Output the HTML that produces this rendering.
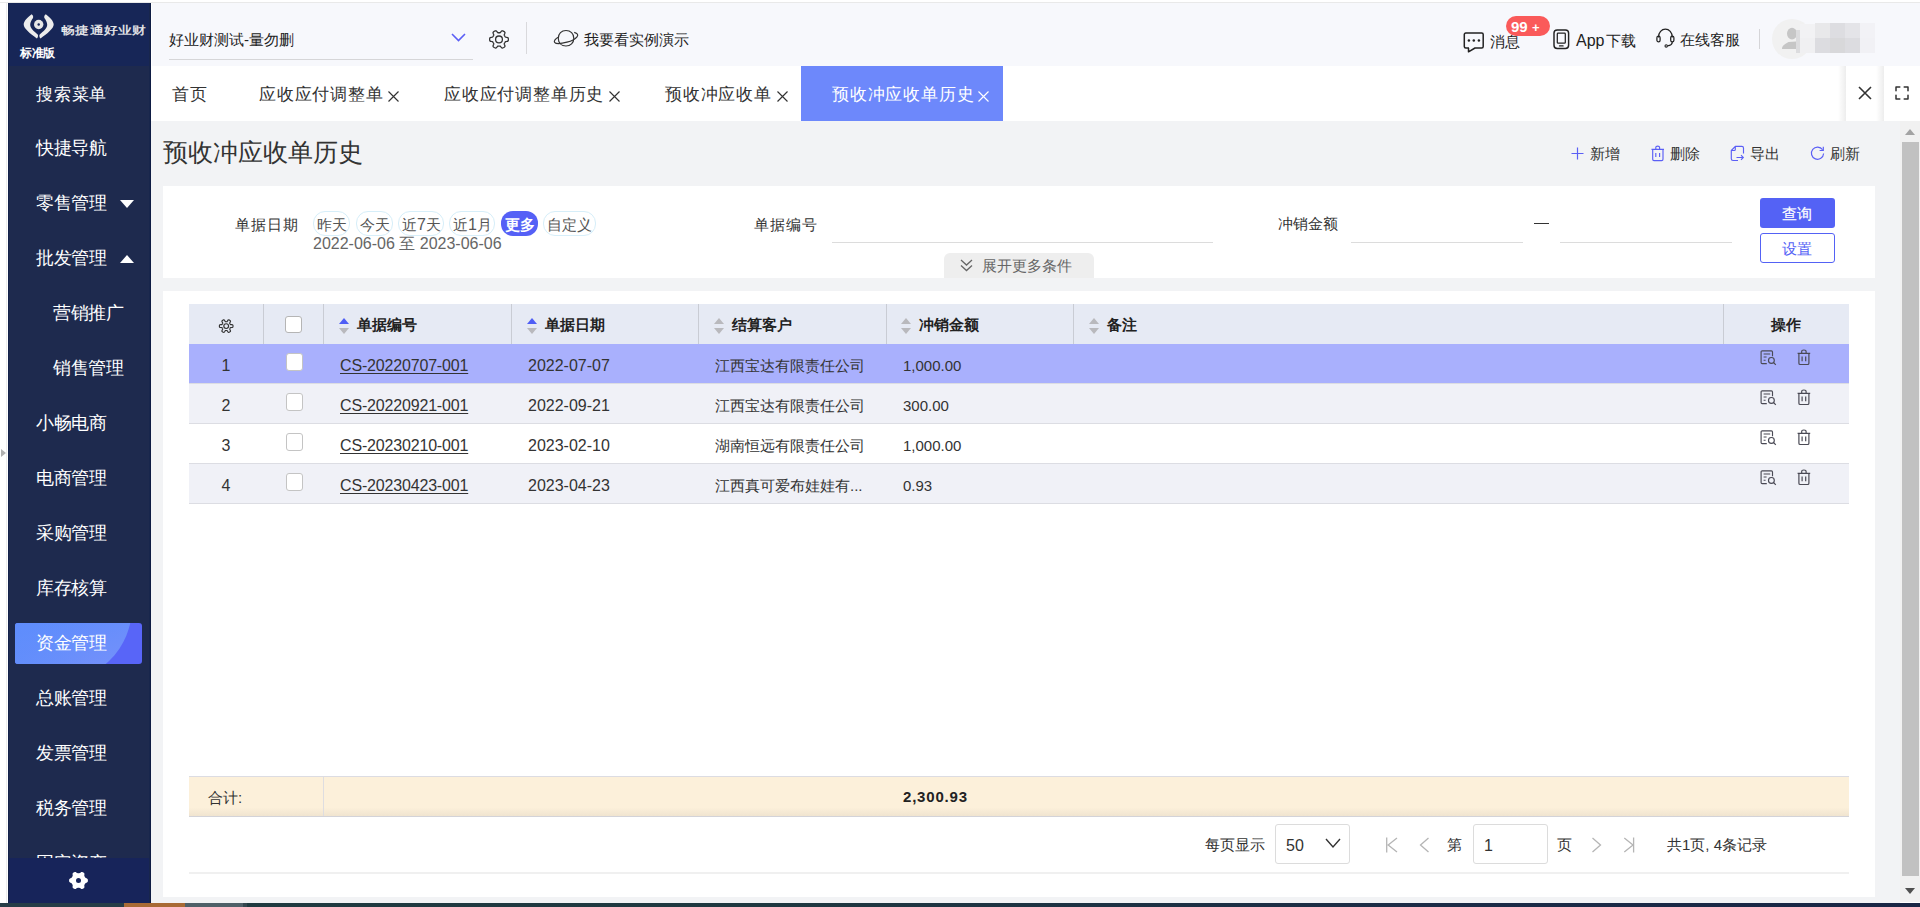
<!DOCTYPE html>
<html><head><meta charset="utf-8">
<style>
*{box-sizing:border-box;margin:0;padding:0}
html,body{width:1920px;height:907px;overflow:hidden;background:#fff;font-family:"Liberation Sans",sans-serif;color:#333}
.a{position:absolute;white-space:nowrap}
.t{position:absolute;white-space:nowrap;line-height:1}
svg{position:absolute;overflow:visible}
</style></head><body>
<!-- frame lines -->
<div class="a" style="left:0;top:2px;width:1920px;height:1px;background:#e9e9e9"></div>
<div class="a" style="left:6px;top:2px;width:1px;height:901px;background:#ececec"></div>

<!-- SIDEBAR -->
<div class="a" style="left:8px;top:3px;width:143px;height:900px;background:#1e2a4e"></div>
<div class="a" style="left:8px;top:3px;width:143px;height:63px;background:#172657"></div>
<div class="a" style="left:149px;top:3px;width:1px;height:900px;background:#18264c"></div><div class="a" style="left:150px;top:3px;width:1px;height:900px;background:#0e1c43"></div>
<!-- logo -->
<svg style="left:20px;top:10px" width="40" height="32" viewBox="0 0 40 32">
  <g id="pt"><path d="M11.6 4.2 C7.5 7.5 3.7 11 3.7 14.5 C3.7 18.5 10 23.5 16.9 28.4 C18.2 27.3 18.3 25.6 17.7 24.6 C14 21.2 10.2 18.3 10.2 14.8 C10.2 12.3 11.6 10 13 8 C13.6 6.4 12.8 5 11.6 4.2 Z" fill="#ececec"/></g>
  <g transform="translate(37.4 0) scale(-1 1)"><path d="M11.6 4.2 C7.5 7.5 3.7 11 3.7 14.5 C3.7 18.5 10 23.5 16.9 28.4 C18.2 27.3 18.3 25.6 17.7 24.6 C14 21.2 10.2 18.3 10.2 14.8 C10.2 12.3 11.6 10 13 8 C13.6 6.4 12.8 5 11.6 4.2 Z" fill="#ececec"/></g>
  <circle cx="18.7" cy="14.5" r="4.7" fill="#e6e6e6"/><circle cx="18.7" cy="14.5" r="1.2" fill="#172657"/>
</svg>
<div class="t" style="left:61px;top:23.5px;font-size:14px;color:#f0f0f0;letter-spacing:0.3px;-webkit-text-stroke:0.35px #f0f0f0;transform:scaleY(0.8);transform-origin:0 0">畅捷通好业财</div>
<div class="t" style="left:20px;top:47px;font-size:12px;color:#fff;font-weight:bold;letter-spacing:-0.5px">标准版</div>

<!-- menu -->
<div class="t" style="left:36px;top:86px;font-size:17px;letter-spacing:0.8px;color:#fff">搜索菜单</div>
<div class="t" style="left:36px;top:140px;font-size:17.5px;color:#fff;letter-spacing:-0.5px">快捷导航</div>
<div class="t" style="left:36px;top:195px;font-size:17.5px;color:#fff;letter-spacing:-0.5px">零售管理</div>
<svg style="left:120px;top:200px" width="14" height="8"><path d="M0 0H14L7 8Z" fill="#fff"/></svg>
<div class="t" style="left:36px;top:250px;font-size:17.5px;color:#fff;letter-spacing:-0.5px">批发管理</div>
<svg style="left:120px;top:255px" width="14" height="8"><path d="M0 8H14L7 0Z" fill="#fff"/></svg>
<div class="t" style="left:53px;top:305px;font-size:17.5px;color:#fff;letter-spacing:-0.5px">营销推广</div>
<div class="t" style="left:53px;top:360px;font-size:17.5px;color:#fff;letter-spacing:-0.5px">销售管理</div>
<div class="t" style="left:36px;top:415px;font-size:17.5px;color:#fff;letter-spacing:-0.5px">小畅电商</div>
<div class="t" style="left:36px;top:470px;font-size:17.5px;color:#fff;letter-spacing:-0.5px">电商管理</div>
<div class="t" style="left:36px;top:525px;font-size:17.5px;color:#fff;letter-spacing:-0.5px">采购管理</div>
<div class="t" style="left:36px;top:580px;font-size:17.5px;color:#fff;letter-spacing:-0.5px">库存核算</div>
<div class="a" style="left:15px;top:623px;width:127px;height:41px;border-radius:3px;overflow:hidden;background:#5865f8">
  <div class="a" style="left:-33.5px;top:-91.2px;width:150px;height:150px;border-radius:75px;background:linear-gradient(160deg,#6a7ffb 0%,#5f8cfc 55%,#7a92fa 100%)"></div>
  <div class="a" style="left:0;top:0;width:127px;height:41px;background:linear-gradient(90deg,rgba(95,142,252,0.6),rgba(95,142,252,0) 60%)"></div>
</div>
<div class="t" style="left:36px;top:635px;font-size:17.5px;color:#fff;letter-spacing:-0.5px">资金管理</div>
<div class="t" style="left:36px;top:690px;font-size:17.5px;color:#fff;letter-spacing:-0.5px">总账管理</div>
<div class="t" style="left:36px;top:745px;font-size:17.5px;color:#fff;letter-spacing:-0.5px">发票管理</div>
<div class="t" style="left:36px;top:800px;font-size:17.5px;color:#fff;letter-spacing:-0.5px">税务管理</div>
<div class="t" style="left:36px;top:855px;font-size:17.5px;color:#fff;letter-spacing:-0.5px">固定资产</div>
<div class="a" style="left:8px;top:858px;width:141px;height:45px;background:#17245a"></div>
<svg style="left:68px;top:870px" width="21" height="21" viewBox="0 0 21 21"><path fill="#fff" fill-rule="evenodd" d="M19.90 10.50 L19.88 10.01 L19.79 9.52 L19.61 9.06 L19.22 8.65 L18.57 8.34 L17.91 8.09 L17.48 7.82 L17.22 7.51 L17.01 7.18 L16.82 6.85 L16.63 6.52 L16.45 6.18 L16.31 5.79 L16.29 5.29 L16.40 4.60 L16.46 3.88 L16.30 3.33 L15.99 2.94 L15.61 2.63 L15.20 2.36 L14.76 2.13 L14.30 1.96 L13.80 1.89 L13.25 2.03 L12.66 2.43 L12.12 2.88 L11.67 3.11 L11.27 3.18 L10.88 3.20 L10.50 3.20 L10.12 3.20 L9.73 3.18 L9.33 3.11 L8.88 2.88 L8.34 2.43 L7.75 2.03 L7.20 1.89 L6.70 1.96 L6.24 2.13 L5.80 2.36 L5.39 2.63 L5.01 2.94 L4.70 3.33 L4.54 3.88 L4.60 4.60 L4.71 5.29 L4.69 5.79 L4.55 6.18 L4.37 6.52 L4.18 6.85 L3.99 7.18 L3.78 7.51 L3.52 7.82 L3.09 8.09 L2.43 8.34 L1.78 8.65 L1.39 9.06 L1.21 9.52 L1.12 10.01 L1.10 10.50 L1.12 10.99 L1.21 11.48 L1.39 11.94 L1.78 12.35 L2.43 12.66 L3.09 12.91 L3.52 13.18 L3.78 13.49 L3.99 13.82 L4.18 14.15 L4.37 14.48 L4.55 14.82 L4.69 15.21 L4.71 15.71 L4.60 16.40 L4.54 17.12 L4.70 17.67 L5.01 18.06 L5.39 18.37 L5.80 18.64 L6.24 18.87 L6.70 19.04 L7.20 19.11 L7.75 18.97 L8.34 18.57 L8.88 18.12 L9.33 17.89 L9.73 17.82 L10.12 17.80 L10.50 17.80 L10.88 17.80 L11.27 17.82 L11.67 17.89 L12.12 18.12 L12.66 18.57 L13.25 18.97 L13.80 19.11 L14.30 19.04 L14.76 18.87 L15.20 18.64 L15.61 18.37 L15.99 18.06 L16.30 17.67 L16.46 17.12 L16.40 16.40 L16.29 15.71 L16.31 15.21 L16.45 14.82 L16.63 14.48 L16.82 14.15 L17.01 13.82 L17.22 13.49 L17.48 13.18 L17.91 12.91 L18.57 12.66 L19.22 12.35 L19.61 11.94 L19.79 11.48 L19.88 10.99 Z M10.5 8 A2.5 2.5 0 1 0 10.5 13 A2.5 2.5 0 1 0 10.5 8 Z"/></svg>

<svg style="left:1px;top:449px" width="5" height="8"><path d="M0 0L5 4L0 8Z" fill="#b0b0b0"/></svg>
<div class="a" style="left:8px;top:3px;width:1px;height:900px;background:#13214a"></div>
<!-- HEADER -->
<div class="a" style="left:151px;top:3px;width:1769px;height:63px;background:#f7f8fc"></div>
<div class="a" style="left:151px;top:3px;width:1px;height:63px;background:#fff"></div>
<div class="t" style="left:169px;top:32px;font-size:15px;color:#222">好业财测试-量勿删</div>
<div class="a" style="left:169px;top:59px;width:304px;height:1px;background:#d6d6d8"></div>
<svg style="left:451px;top:33px" width="15" height="9"><path d="M1 1L7.5 7.5L14 1" stroke="#5b5ff5" stroke-width="1.6" fill="none"/></svg>
<svg style="left:488px;top:28px" width="22" height="23" viewBox="0 0 22 23"><path fill="none" stroke="#333" stroke-width="1.3" stroke-linejoin="round" d="M20.35 11.40 L20.33 10.91 L20.27 10.43 L20.13 9.95 L19.71 9.55 L18.73 9.33 L17.74 9.21 L17.31 8.98 L17.10 8.68 L16.93 8.38 L16.76 8.08 L16.58 7.78 L16.40 7.48 L16.25 7.15 L16.27 6.66 L16.66 5.74 L16.96 4.78 L16.82 4.22 L16.48 3.86 L16.09 3.56 L15.68 3.30 L15.24 3.07 L14.79 2.88 L14.31 2.77 L13.75 2.93 L13.07 3.67 L12.47 4.46 L12.06 4.73 L11.70 4.76 L11.35 4.75 L11.00 4.75 L10.65 4.75 L10.30 4.76 L9.94 4.73 L9.53 4.46 L8.93 3.67 L8.25 2.93 L7.69 2.77 L7.21 2.88 L6.76 3.07 L6.33 3.30 L5.91 3.56 L5.52 3.86 L5.18 4.22 L5.04 4.78 L5.34 5.74 L5.73 6.66 L5.75 7.15 L5.60 7.48 L5.42 7.78 L5.24 8.08 L5.07 8.38 L4.90 8.68 L4.69 8.98 L4.26 9.21 L3.27 9.33 L2.29 9.55 L1.87 9.95 L1.73 10.43 L1.67 10.91 L1.65 11.40 L1.67 11.89 L1.73 12.37 L1.87 12.85 L2.29 13.25 L3.27 13.47 L4.26 13.59 L4.69 13.82 L4.90 14.12 L5.07 14.42 L5.24 14.72 L5.42 15.02 L5.60 15.32 L5.75 15.65 L5.73 16.14 L5.34 17.06 L5.04 18.02 L5.18 18.58 L5.52 18.94 L5.91 19.24 L6.32 19.50 L6.76 19.73 L7.21 19.92 L7.69 20.03 L8.25 19.87 L8.93 19.13 L9.53 18.34 L9.94 18.07 L10.30 18.04 L10.65 18.05 L11.00 18.05 L11.35 18.05 L11.70 18.04 L12.06 18.07 L12.47 18.34 L13.07 19.13 L13.75 19.87 L14.31 20.03 L14.79 19.92 L15.24 19.73 L15.68 19.50 L16.09 19.24 L16.48 18.94 L16.82 18.58 L16.96 18.02 L16.66 17.06 L16.27 16.14 L16.25 15.65 L16.40 15.32 L16.58 15.02 L16.76 14.72 L16.93 14.42 L17.10 14.12 L17.31 13.82 L17.74 13.59 L18.73 13.47 L19.71 13.25 L20.13 12.85 L20.27 12.37 L20.33 11.89 Z"/><circle cx="11" cy="11.4" r="3.4" fill="none" stroke="#333" stroke-width="1.3"/></svg>
<div class="a" style="left:526px;top:22px;width:1px;height:32px;background:#d9d9dc"></div>
<svg style="left:550px;top:25px" width="32" height="26" viewBox="0 0 32 26">
  <path d="M16 5.5C20.5 5.5 23.8 8.5 23.8 13.2C23.8 18 20.5 21 16 21C11.5 21 8.3 18 8.3 13.2C8.3 8.5 11.5 5.5 16 5.5Z" fill="none" stroke="#333" stroke-width="1.2"/>
  <path d="M8.6 12C5.3 13.8 3.6 15.8 4.6 17.3C6 19.2 12 18.6 17 17.2C21.5 15.9 25.2 13.9 27 11.8C28.4 10.2 27.8 8.2 24.2 7.3" fill="none" stroke="#333" stroke-width="1.2"/>
</svg>
<div class="t" style="left:584px;top:32px;font-size:15px;color:#222">我要看实例演示</div>

<!-- right header -->
<svg style="left:1463px;top:32px" width="22" height="22" viewBox="0 0 22 22">
  <path d="M6 16H2.8C1.9 16 1.3 15.4 1.3 14.5V2.5C1.3 1.6 1.9 1 2.8 1H18.7C19.6 1 20.2 1.6 20.2 2.5V14.5C20.2 15.4 19.6 16 18.7 16H12L5.5 19.8V16" fill="none" stroke="#222" stroke-width="1.5" stroke-linejoin="round"/>
  <circle cx="5.9" cy="8.4" r="1.25" fill="#222"/><circle cx="10.8" cy="8.4" r="1.25" fill="#222"/><circle cx="15.9" cy="8.4" r="1.25" fill="#222"/>
</svg>
<div class="t" style="left:1490px;top:34px;font-size:15px;color:#222">消息</div>
<div class="a" style="left:1506px;top:16px;width:44px;height:20px;border-radius:10px;background:#fa5a5a"></div>
<div class="t" style="left:1511px;top:19px;font-size:15px;color:#fff;font-weight:bold">99</div><div class="t" style="left:1532px;top:21px;font-size:13px;color:#fff;font-weight:bold">+</div>
<svg style="left:1553px;top:29px" width="17" height="21" viewBox="0 0 17 21">
  <rect x="1" y="0.9" width="14.6" height="18.6" rx="3.2" fill="none" stroke="#222" stroke-width="1.45"/>
  <rect x="4.3" y="4.2" width="8" height="10" rx="0.8" fill="none" stroke="#222" stroke-width="1.25"/>
  <path d="M6.5 16.9H10.1" stroke="#222" stroke-width="1.2" stroke-linecap="round"/>
</svg>
<div class="t" style="left:1576px;top:33px;font-size:16px;color:#222">App</div>
<div class="t" style="left:1606px;top:33px;font-size:15px;color:#222">下载</div>
<svg style="left:1656px;top:28px" width="19" height="20" viewBox="0 0 19 20">
  <path d="M2.6 9.5V8.8C2.6 4.6 5.6 1.2 9.4 1.2C13.2 1.2 16.2 4.6 16.2 8.8V9.5" fill="none" stroke="#222" stroke-width="1.3"/>
  <rect x="0.9" y="8.2" width="3.2" height="5.6" rx="1.6" fill="none" stroke="#222" stroke-width="1.25"/>
  <rect x="14.7" y="8.2" width="3.2" height="5.6" rx="1.6" fill="none" stroke="#222" stroke-width="1.25"/>
  <path d="M16.3 13.8C16.3 16.3 14.5 17.6 11.5 17.8" fill="none" stroke="#222" stroke-width="1.25"/>
  <circle cx="10.2" cy="17.9" r="1.2" fill="none" stroke="#222" stroke-width="1.1"/>
</svg>
<div class="t" style="left:1680px;top:32px;font-size:15px;color:#222">在线客服</div>
<div class="a" style="left:1759px;top:29px;width:1px;height:20px;background:#d5d5d8"></div>
<div class="a" style="left:1772px;top:19px;width:40px;height:40px;border-radius:20px;background:#f1f1f1"></div>
<svg style="left:1780px;top:26px" width="20" height="26" viewBox="0 0 20 26">
  <ellipse cx="12" cy="7.6" rx="5" ry="5.8" fill="#c6c6c6"/><path d="M2 23 C2 19.5 5 18 8.5 16 L16 15.5 L16 23 Z" fill="#c6c6c6"/>
</svg>
<div class="a" style="left:1796px;top:30px;width:4px;height:23px;background:#dcdcde"></div>
<div class="a" style="left:1800px;top:24px;width:15px;height:14px;background:#f2f2f4"></div>
<div class="a" style="left:1800px;top:38px;width:15px;height:15px;background:#f0f0f2"></div>
<div class="a" style="left:1815px;top:23px;width:15px;height:15px;background:#e8e8ea"></div>
<div class="a" style="left:1815px;top:38px;width:15px;height:15px;background:#dcdce0"></div>
<div class="a" style="left:1830px;top:23px;width:15px;height:15px;background:#dddde1"></div>
<div class="a" style="left:1830px;top:38px;width:15px;height:15px;background:#d8d8da"></div>
<div class="a" style="left:1845px;top:23px;width:15px;height:15px;background:#e4e4e8"></div>
<div class="a" style="left:1845px;top:38px;width:15px;height:15px;background:#dcdce0"></div>
<div class="a" style="left:1860px;top:23px;width:15px;height:15px;background:#f2f2f6"></div>
<div class="a" style="left:1860px;top:38px;width:15px;height:15px;background:#f1f1f5"></div>

<!-- TAB BAR -->
<div class="a" style="left:151px;top:66px;width:1769px;height:55px;background:#fff"></div>
<div class="t" style="left:172px;top:86px;font-size:17px;letter-spacing:0.8px;color:#333">首页</div>
<div class="t" style="left:259px;top:86px;font-size:17px;letter-spacing:0.8px;color:#333">应收应付调整单</div>
<svg style="left:388px;top:91px" width="11" height="11"><path d="M0.5 0.5L10.5 10.5M10.5 0.5L0.5 10.5" stroke="#333" stroke-width="1.15"/></svg>
<div class="t" style="left:444px;top:86px;font-size:17px;letter-spacing:0.8px;color:#333">应收应付调整单历史</div>
<svg style="left:609px;top:91px" width="11" height="11"><path d="M0.5 0.5L10.5 10.5M10.5 0.5L0.5 10.5" stroke="#333" stroke-width="1.15"/></svg>
<div class="t" style="left:665px;top:86px;font-size:17px;letter-spacing:0.8px;color:#333">预收冲应收单</div>
<svg style="left:777px;top:91px" width="11" height="11"><path d="M0.5 0.5L10.5 10.5M10.5 0.5L0.5 10.5" stroke="#333" stroke-width="1.15"/></svg>
<div class="a" style="left:801px;top:66px;width:202px;height:55px;background:#6d88fb"></div>
<div class="t" style="left:832px;top:86px;font-size:17px;letter-spacing:0.8px;color:#fff">预收冲应收单历史</div>
<svg style="left:978px;top:91px" width="11" height="11"><path d="M0.5 0.5L10.5 10.5M10.5 0.5L0.5 10.5" stroke="#fff" stroke-width="1.15"/></svg>
<!-- close / fullscreen -->
<div class="a" style="left:1838px;top:66px;width:8px;height:55px;background:linear-gradient(90deg,rgba(0,0,0,0),rgba(0,0,0,0.07))"></div>
<div class="a" style="left:1846px;top:66px;width:38px;height:55px;background:#fff"></div>
<div class="a" style="left:1876px;top:66px;width:8px;height:55px;background:linear-gradient(90deg,rgba(0,0,0,0),rgba(0,0,0,0.07))"></div>
<div class="a" style="left:1884px;top:66px;width:36px;height:55px;background:#fff"></div>
<svg style="left:1858px;top:86px" width="14" height="14"><path d="M1 1L13 13M13 1L1 13" stroke="#333" stroke-width="1.6"/></svg>
<svg style="left:1895px;top:86px" width="14" height="14"><path d="M1 4.8V1H4.8M9.2 1H13V4.8M13 9.2V13H9.2M4.8 13H1V9.2" fill="none" stroke="#333" stroke-width="1.5" stroke-linejoin="round" stroke-linecap="round"/></svg>

<!-- CONTENT -->
<div class="a" style="left:151px;top:121px;width:1749px;height:782px;background:#f2f3f5"></div>
<div class="t" style="left:163px;top:140px;font-size:25px;color:#333">预收冲应收单历史</div>

<!-- toolbar -->
<svg style="left:1571px;top:147px" width="13" height="13"><path d="M6.5 0.5V12.5M0.5 6.5H12.5" stroke="#5b5ff5" stroke-width="1.2"/></svg>
<div class="t" style="left:1590px;top:146px;font-size:15px;color:#333">新增</div>
<svg style="left:1651px;top:145px" width="14" height="17" viewBox="0 0 14 17">
  <path d="M0.5 4.4H13M4.8 4.2V2.6C4.8 1.6 5.5 1.1 6.7 1.1C7.9 1.1 8.6 1.6 8.6 2.6V4.2M1.7 4.4V14.3C1.7 15.2 2.2 15.6 3 15.6H10.7C11.5 15.6 12 15.2 12 14.3V4.4M4.8 8V12M8.6 8V12" fill="none" stroke="#5b5ff5" stroke-width="1.15"/>
</svg>
<div class="t" style="left:1670px;top:146px;font-size:15px;color:#333">删除</div>
<svg style="left:1730px;top:145px" width="15" height="17" viewBox="0 0 15 17">
  <path d="M8 15.5H3C2 15.5 1.3 14.8 1.3 13.8V5.5L5.3 1.3H11.8C12.8 1.3 13.5 2 13.5 3V8.5M1.3 5.5H4.3C4.9 5.5 5.3 5.1 5.3 4.5V1.3" fill="none" stroke="#5b5ff5" stroke-width="1.15" stroke-linejoin="round"/>
  <path d="M6.5 12.5H13.3M11 10.2L13.3 12.5L11 14.8" fill="none" stroke="#5b5ff5" stroke-width="1.15"/>
</svg>
<div class="t" style="left:1750px;top:146px;font-size:15px;color:#333">导出</div>
<svg style="left:1810px;top:146px" width="15" height="15" viewBox="0 0 15 15">
  <path d="M12.6 3.8 A6.1 6.1 0 1 0 13.6 7.5" fill="none" stroke="#5b5ff5" stroke-width="1.15"/>
  <path d="M13.3 0.8V4.5H9.6" fill="none" stroke="#5b5ff5" stroke-width="1.15"/>
</svg>
<div class="t" style="left:1830px;top:146px;font-size:15px;color:#333">刷新</div>

<!-- SEARCH CARD -->
<div class="a" style="left:163px;top:186px;width:1712px;height:92px;background:#fff"></div>
<div class="t" style="left:235px;top:217px;font-size:15px;color:#333;letter-spacing:1px">单据日期</div>
<div class="a" style="left:313px;top:211px;width:37px;height:25px;border:1px solid #d6eef9;border-radius:12px"></div>
<div class="t" style="left:317px;top:217px;font-size:15px;color:#555">昨天</div>
<div class="a" style="left:356px;top:211px;width:37px;height:25px;border:1px solid #d6eef9;border-radius:12px"></div>
<div class="t" style="left:360px;top:217px;font-size:15px;color:#555">今天</div>
<div class="a" style="left:398px;top:211px;width:46px;height:25px;border:1px solid #d6eef9;border-radius:12px"></div>
<div class="t" style="left:402px;top:217px;font-size:15px;color:#555">近<span style="font-size:16px">7</span>天</div>
<div class="a" style="left:449px;top:211px;width:46px;height:25px;border:1px solid #d6eef9;border-radius:12px"></div>
<div class="t" style="left:453px;top:217px;font-size:15px;color:#555">近<span style="font-size:16px">1</span>月</div>
<div class="a" style="left:501px;top:211px;width:37px;height:25px;background:#5560f6;border-radius:12px"></div>
<div class="t" style="left:505px;top:217px;font-size:15px;color:#fff;font-weight:bold">更多</div>
<div class="a" style="left:543px;top:211px;width:53px;height:25px;border:1px solid #d6eef9;border-radius:12px"></div>
<div class="t" style="left:547px;top:217px;font-size:15px;color:#555">自定义</div>
<div class="t" style="left:313px;top:236px;font-size:16px;color:#666">2022-06-06 <span>至</span> 2023-06-06</div>

<div class="t" style="left:754px;top:217px;font-size:15px;color:#333;letter-spacing:1px">单据编号</div>
<div class="a" style="left:832px;top:242px;width:381px;height:1px;background:#dcdcdc"></div>
<div class="a" style="left:944px;top:253px;width:150px;height:25px;background:#eeeeee;border-radius:6px 6px 0 0"></div>
<svg style="left:960px;top:259px" width="13" height="13" viewBox="0 0 13 13"><path d="M1 1L6.5 6L12 1M1 6.5L6.5 11.5L12 6.5" fill="none" stroke="#666" stroke-width="1.3"/></svg>
<div class="t" style="left:982px;top:258px;font-size:15px;color:#666">展开更多条件</div>

<div class="t" style="left:1278px;top:216px;font-size:15px;color:#333">冲销金额</div>
<div class="a" style="left:1351px;top:242px;width:172px;height:1px;background:#dcdcdc"></div>
<div class="a" style="left:1534px;top:223px;width:15px;height:1px;background:#333"></div>
<div class="a" style="left:1560px;top:242px;width:172px;height:1px;background:#dcdcdc"></div>
<div class="a" style="left:1760px;top:198px;width:75px;height:30px;background:#5462f5;border-radius:3px"></div>
<div class="t" style="left:1782px;top:206px;font-size:15px;color:#fff;-webkit-text-stroke:0.2px #fff">查询</div>
<div class="a" style="left:1760px;top:233px;width:75px;height:30px;border:1px solid #5462f5;border-radius:3px;background:#fff"></div>
<div class="t" style="left:1782px;top:241px;font-size:15px;color:#5462f5">设置</div>

<!-- TABLE CARD -->
<div class="a" style="left:163px;top:291px;width:1712px;height:606px;background:#fff"></div>
<!-- header -->
<div class="a" style="left:189px;top:304px;width:1660px;height:40px;background:#e6eaf4"></div>
<div class="a" style="left:263px;top:304px;width:1px;height:40px;background:#c9ccd4"></div>
<div class="a" style="left:323px;top:304px;width:1px;height:40px;background:#c9ccd4"></div>
<div class="a" style="left:511px;top:304px;width:1px;height:40px;background:#c9ccd4"></div>
<div class="a" style="left:698px;top:304px;width:1px;height:40px;background:#c9ccd4"></div>
<div class="a" style="left:886px;top:304px;width:1px;height:40px;background:#c9ccd4"></div>
<div class="a" style="left:1073px;top:304px;width:1px;height:40px;background:#c9ccd4"></div>
<div class="a" style="left:1723px;top:304px;width:1px;height:40px;background:#c9ccd4"></div>
<svg style="left:218px;top:318px" width="16" height="16" viewBox="0 0 16 16"><path fill="none" stroke="#333" stroke-width="1.15" stroke-linejoin="round" d="M15.00 8.10 L14.99 7.74 L14.95 7.39 L14.85 7.05 L14.54 6.75 L13.61 6.65 L12.69 6.64 L12.37 6.50 L12.23 6.31 L12.12 6.10 L12.01 5.90 L11.89 5.70 L11.77 5.51 L11.67 5.29 L11.71 4.94 L12.16 4.14 L12.54 3.28 L12.44 2.86 L12.19 2.61 L11.90 2.40 L11.60 2.21 L11.29 2.04 L10.96 1.90 L10.61 1.81 L10.20 1.94 L9.65 2.69 L9.18 3.48 L8.90 3.69 L8.66 3.71 L8.43 3.70 L8.20 3.70 L7.97 3.70 L7.74 3.71 L7.50 3.69 L7.22 3.48 L6.75 2.69 L6.20 1.94 L5.79 1.81 L5.44 1.90 L5.11 2.04 L4.80 2.21 L4.50 2.40 L4.21 2.61 L3.96 2.86 L3.86 3.28 L4.24 4.14 L4.69 4.94 L4.73 5.29 L4.63 5.51 L4.51 5.70 L4.39 5.90 L4.28 6.10 L4.17 6.31 L4.03 6.50 L3.71 6.64 L2.79 6.65 L1.86 6.75 L1.55 7.05 L1.45 7.39 L1.41 7.74 L1.40 8.10 L1.41 8.46 L1.45 8.81 L1.55 9.15 L1.86 9.45 L2.79 9.55 L3.71 9.56 L4.03 9.70 L4.17 9.89 L4.28 10.10 L4.39 10.30 L4.51 10.50 L4.63 10.69 L4.73 10.91 L4.69 11.26 L4.24 12.06 L3.86 12.92 L3.96 13.34 L4.21 13.59 L4.50 13.80 L4.80 13.99 L5.11 14.16 L5.44 14.30 L5.79 14.39 L6.20 14.26 L6.75 13.51 L7.22 12.72 L7.50 12.51 L7.74 12.49 L7.97 12.50 L8.20 12.50 L8.43 12.50 L8.66 12.49 L8.90 12.51 L9.18 12.72 L9.65 13.51 L10.20 14.26 L10.61 14.39 L10.96 14.30 L11.29 14.16 L11.60 13.99 L11.90 13.80 L12.19 13.59 L12.44 13.34 L12.54 12.92 L12.16 12.06 L11.71 11.26 L11.67 10.91 L11.77 10.69 L11.89 10.50 L12.01 10.30 L12.12 10.10 L12.23 9.89 L12.37 9.70 L12.69 9.56 L13.61 9.55 L14.54 9.45 L14.85 9.15 L14.95 8.81 L14.99 8.46 Z"/><circle cx="8.2" cy="8.1" r="2.4" fill="none" stroke="#333" stroke-width="1.15"/></svg>
<div class="a" style="left:285px;top:316px;width:17px;height:17px;border:1px solid #b5b5b5;border-radius:3px;background:#fff"></div>
<svg style="left:339px;top:318px" width="10" height="16"><path d="M0 6H10L5 0Z" fill="#4f5ef5"/><path d="M0 10H10L5 16Z" fill="#b9b9bd"/></svg>
<div class="t" style="left:357px;top:317px;font-size:15px;color:#222;font-weight:bold">单据编号</div>
<svg style="left:527px;top:318px" width="10" height="16"><path d="M0 6H10L5 0Z" fill="#4f5ef5"/><path d="M0 10H10L5 16Z" fill="#b9b9bd"/></svg>
<div class="t" style="left:545px;top:317px;font-size:15px;color:#222;font-weight:bold">单据日期</div>
<svg style="left:714px;top:318px" width="10" height="16"><path d="M0 6H10L5 0Z" fill="#b9b9bd"/><path d="M0 10H10L5 16Z" fill="#b9b9bd"/></svg>
<div class="t" style="left:732px;top:317px;font-size:15px;color:#222;font-weight:bold">结算客户</div>
<svg style="left:901px;top:318px" width="10" height="16"><path d="M0 6H10L5 0Z" fill="#b9b9bd"/><path d="M0 10H10L5 16Z" fill="#b9b9bd"/></svg>
<div class="t" style="left:919px;top:317px;font-size:15px;color:#222;font-weight:bold">冲销金额</div>
<svg style="left:1089px;top:318px" width="10" height="16"><path d="M0 6H10L5 0Z" fill="#b9b9bd"/><path d="M0 10H10L5 16Z" fill="#b9b9bd"/></svg>
<div class="t" style="left:1107px;top:317px;font-size:15px;color:#222;font-weight:bold">备注</div>
<div class="t" style="left:1771px;top:317px;font-size:15px;color:#222;font-weight:bold">操作</div>

<!-- rows -->
<div class="a" style="left:189px;top:344px;width:1660px;height:40px;background:#a9b0fd;border-bottom:1px solid #dcdde3"></div>
<div class="t" style="left:189px;width:74px;text-align:center;top:358px;font-size:16px;color:#333">1</div>
<div class="a" style="left:286px;top:353px;width:17px;height:18px;border:1px solid #c4c4c4;border-radius:3px;background:#fff"></div>
<div class="t" style="left:340px;top:358px;font-size:16px;color:#333;letter-spacing:-0.17px;text-decoration:underline;text-underline-offset:2px">CS-20220707-001</div>
<div class="t" style="left:528px;top:358px;font-size:16px;color:#333">2022-07-07</div>
<div class="t" style="left:715px;top:358px;font-size:15px;color:#333">江西宝达有限责任公司</div>
<div class="t" style="left:903px;top:358px;font-size:15px;color:#333">1,000.00</div>
<svg style="left:1760px;top:350px" width="18" height="16" viewBox="0 0 18 16"><path d="M6.8 13.6H2.2C1.5 13.6 1.1 13.2 1.1 12.5V2C1.1 1.3 1.5 0.9 2.2 0.9H11.4C12.1 0.9 12.5 1.3 12.5 2V6.2" fill="none" stroke="#4a4a55" stroke-width="1.15"/><path d="M3.6 4H10.2M3.6 7H6.6M3.6 10.2H5.6" stroke="#4a4a55" stroke-width="1.15"/><circle cx="11.4" cy="10.4" r="2.9" fill="none" stroke="#4a4a55" stroke-width="1.15"/><path d="M13.5 12.5L15.8 14.8" stroke="#4a4a55" stroke-width="1.2"/></svg>
<svg style="left:1797px;top:349px" width="14" height="17" viewBox="0 0 14 17"><path d="M0.6 4.3H13.2M4.7 4.1V2.5C4.7 1.5 5.4 1 6.9 1C8.4 1 9.1 1.5 9.1 2.5V4.1M1.9 4.3V14.2C1.9 15.1 2.4 15.5 3.2 15.5H10.6C11.4 15.5 11.9 15.1 11.9 14.2V4.3M5.1 7.6V12.2M8.7 7.6V12.2" fill="none" stroke="#4a4a55" stroke-width="1.2"/></svg>
<div class="a" style="left:189px;top:384px;width:1660px;height:40px;background:#f0f1f7;border-bottom:1px solid #dcdde3"></div>
<div class="t" style="left:189px;width:74px;text-align:center;top:398px;font-size:16px;color:#333">2</div>
<div class="a" style="left:286px;top:393px;width:17px;height:18px;border:1px solid #c4c4c4;border-radius:3px;background:#fff"></div>
<div class="t" style="left:340px;top:398px;font-size:16px;color:#333;letter-spacing:-0.17px;text-decoration:underline;text-underline-offset:2px">CS-20220921-001</div>
<div class="t" style="left:528px;top:398px;font-size:16px;color:#333">2022-09-21</div>
<div class="t" style="left:715px;top:398px;font-size:15px;color:#333">江西宝达有限责任公司</div>
<div class="t" style="left:903px;top:398px;font-size:15px;color:#333">300.00</div>
<svg style="left:1760px;top:390px" width="18" height="16" viewBox="0 0 18 16"><path d="M6.8 13.6H2.2C1.5 13.6 1.1 13.2 1.1 12.5V2C1.1 1.3 1.5 0.9 2.2 0.9H11.4C12.1 0.9 12.5 1.3 12.5 2V6.2" fill="none" stroke="#4a4a55" stroke-width="1.15"/><path d="M3.6 4H10.2M3.6 7H6.6M3.6 10.2H5.6" stroke="#4a4a55" stroke-width="1.15"/><circle cx="11.4" cy="10.4" r="2.9" fill="none" stroke="#4a4a55" stroke-width="1.15"/><path d="M13.5 12.5L15.8 14.8" stroke="#4a4a55" stroke-width="1.2"/></svg>
<svg style="left:1797px;top:389px" width="14" height="17" viewBox="0 0 14 17"><path d="M0.6 4.3H13.2M4.7 4.1V2.5C4.7 1.5 5.4 1 6.9 1C8.4 1 9.1 1.5 9.1 2.5V4.1M1.9 4.3V14.2C1.9 15.1 2.4 15.5 3.2 15.5H10.6C11.4 15.5 11.9 15.1 11.9 14.2V4.3M5.1 7.6V12.2M8.7 7.6V12.2" fill="none" stroke="#4a4a55" stroke-width="1.2"/></svg>
<div class="a" style="left:189px;top:424px;width:1660px;height:40px;background:#ffffff;border-bottom:1px solid #dcdde3"></div>
<div class="t" style="left:189px;width:74px;text-align:center;top:438px;font-size:16px;color:#333">3</div>
<div class="a" style="left:286px;top:433px;width:17px;height:18px;border:1px solid #c4c4c4;border-radius:3px;background:#fff"></div>
<div class="t" style="left:340px;top:438px;font-size:16px;color:#333;letter-spacing:-0.17px;text-decoration:underline;text-underline-offset:2px">CS-20230210-001</div>
<div class="t" style="left:528px;top:438px;font-size:16px;color:#333">2023-02-10</div>
<div class="t" style="left:715px;top:438px;font-size:15px;color:#333">湖南恒远有限责任公司</div>
<div class="t" style="left:903px;top:438px;font-size:15px;color:#333">1,000.00</div>
<svg style="left:1760px;top:430px" width="18" height="16" viewBox="0 0 18 16"><path d="M6.8 13.6H2.2C1.5 13.6 1.1 13.2 1.1 12.5V2C1.1 1.3 1.5 0.9 2.2 0.9H11.4C12.1 0.9 12.5 1.3 12.5 2V6.2" fill="none" stroke="#4a4a55" stroke-width="1.15"/><path d="M3.6 4H10.2M3.6 7H6.6M3.6 10.2H5.6" stroke="#4a4a55" stroke-width="1.15"/><circle cx="11.4" cy="10.4" r="2.9" fill="none" stroke="#4a4a55" stroke-width="1.15"/><path d="M13.5 12.5L15.8 14.8" stroke="#4a4a55" stroke-width="1.2"/></svg>
<svg style="left:1797px;top:429px" width="14" height="17" viewBox="0 0 14 17"><path d="M0.6 4.3H13.2M4.7 4.1V2.5C4.7 1.5 5.4 1 6.9 1C8.4 1 9.1 1.5 9.1 2.5V4.1M1.9 4.3V14.2C1.9 15.1 2.4 15.5 3.2 15.5H10.6C11.4 15.5 11.9 15.1 11.9 14.2V4.3M5.1 7.6V12.2M8.7 7.6V12.2" fill="none" stroke="#4a4a55" stroke-width="1.2"/></svg>
<div class="a" style="left:189px;top:464px;width:1660px;height:40px;background:#f0f1f7;border-bottom:1px solid #dcdde3"></div>
<div class="t" style="left:189px;width:74px;text-align:center;top:478px;font-size:16px;color:#333">4</div>
<div class="a" style="left:286px;top:473px;width:17px;height:18px;border:1px solid #c4c4c4;border-radius:3px;background:#fff"></div>
<div class="t" style="left:340px;top:478px;font-size:16px;color:#333;letter-spacing:-0.17px;text-decoration:underline;text-underline-offset:2px">CS-20230423-001</div>
<div class="t" style="left:528px;top:478px;font-size:16px;color:#333">2023-04-23</div>
<div class="t" style="left:715px;top:478px;font-size:15px;color:#333">江西真可爱布娃娃有...</div>
<div class="t" style="left:903px;top:478px;font-size:15px;color:#333">0.93</div>
<svg style="left:1760px;top:470px" width="18" height="16" viewBox="0 0 18 16"><path d="M6.8 13.6H2.2C1.5 13.6 1.1 13.2 1.1 12.5V2C1.1 1.3 1.5 0.9 2.2 0.9H11.4C12.1 0.9 12.5 1.3 12.5 2V6.2" fill="none" stroke="#4a4a55" stroke-width="1.15"/><path d="M3.6 4H10.2M3.6 7H6.6M3.6 10.2H5.6" stroke="#4a4a55" stroke-width="1.15"/><circle cx="11.4" cy="10.4" r="2.9" fill="none" stroke="#4a4a55" stroke-width="1.15"/><path d="M13.5 12.5L15.8 14.8" stroke="#4a4a55" stroke-width="1.2"/></svg>
<svg style="left:1797px;top:469px" width="14" height="17" viewBox="0 0 14 17"><path d="M0.6 4.3H13.2M4.7 4.1V2.5C4.7 1.5 5.4 1 6.9 1C8.4 1 9.1 1.5 9.1 2.5V4.1M1.9 4.3V14.2C1.9 15.1 2.4 15.5 3.2 15.5H10.6C11.4 15.5 11.9 15.1 11.9 14.2V4.3M5.1 7.6V12.2M8.7 7.6V12.2" fill="none" stroke="#4a4a55" stroke-width="1.2"/></svg>

<!-- summary -->
<div class="a" style="left:189px;top:776px;width:1660px;height:41px;background:linear-gradient(180deg,#fcf0da 0%,#fcf0da 78%,#f0e4d0 100%);border-top:1px solid #dcdce2;border-bottom:1px solid #d3d3d8"></div>
<div class="a" style="left:323px;top:777px;width:1px;height:39px;background:#dedde0"></div>
<div class="t" style="left:208px;top:790px;font-size:15px;color:#333">合计:</div>
<div class="t" style="left:903px;top:789px;font-size:15px;color:#222;font-weight:bold;letter-spacing:0.8px">2,300.93</div>

<!-- pagination -->
<div class="t" style="left:1205px;top:837px;font-size:15px;color:#333">每页显示</div>
<div class="a" style="left:1275px;top:824px;width:75px;height:40px;border:1px solid #dcdcdc;border-radius:3px"></div>
<div class="t" style="left:1286px;top:838px;font-size:16px;color:#333">50</div>
<svg style="left:1325px;top:838px" width="16" height="11"><path d="M1 1L8 9L15 1" fill="none" stroke="#333" stroke-width="1.4"/></svg>
<svg style="left:1386px;top:837px" width="13" height="16"><path d="M0.7 0.5V15.5M11 1L2.2 8L11 15" fill="none" stroke="#b5b5b5" stroke-width="1.3"/></svg>
<svg style="left:1419px;top:837px" width="11" height="16"><path d="M9.5 1L1.5 8L9.5 15" fill="none" stroke="#b5b5b5" stroke-width="1.3"/></svg>
<div class="t" style="left:1447px;top:837px;font-size:15px;color:#333">第</div>
<div class="a" style="left:1473px;top:824px;width:75px;height:40px;border:1px solid #dcdcdc;border-radius:3px"></div>
<div class="t" style="left:1484px;top:838px;font-size:16px;color:#333">1</div>
<div class="t" style="left:1557px;top:837px;font-size:15px;color:#333">页</div>
<svg style="left:1591px;top:837px" width="11" height="16"><path d="M1.5 1L9.5 8L1.5 15" fill="none" stroke="#b5b5b5" stroke-width="1.3"/></svg>
<svg style="left:1623px;top:837px" width="13" height="16"><path d="M10.6 0.5V15.5M1.3 1L10 8L1.3 15" fill="none" stroke="#b5b5b5" stroke-width="1.3"/></svg>
<div class="t" style="left:1667px;top:837px;font-size:15px;color:#333">共1页, 4条记录</div>
<div class="a" style="left:189px;top:872px;width:1660px;height:2px;background:#f0f0f0"></div>

<!-- SCROLLBAR -->
<div class="a" style="left:1900px;top:121px;width:20px;height:781px;background:#f1f1f1"></div>
<svg style="left:1905px;top:129px" width="10" height="6"><path d="M0 6H10L5 0Z" fill="#a3a3a3"/></svg>
<div class="a" style="left:1902px;top:142px;width:17px;height:734px;background:#c1c1c1"></div>
<svg style="left:1905px;top:888px" width="10" height="6"><path d="M0 0H10L5 6Z" fill="#505050"/></svg>
<div class="a" style="left:1900px;top:902px;width:20px;height:1px;background:#fff"></div>

<!-- taskbar strip -->
<div class="a" style="left:0;top:903px;width:1920px;height:4px;background:linear-gradient(90deg,#203b40 0%,#1f3840 40%,#1b2b46 75%,#192645 100%)"></div>
<div class="a" style="left:0;top:903px;width:124px;height:4px;background:#263d47"></div>
<div class="a" style="left:124px;top:903px;width:61px;height:4px;background:#a86a35"></div>
<div class="a" style="left:185px;top:903px;width:58px;height:4px;background:#4f6068"></div><div class="a" style="left:243px;top:903px;width:4px;height:4px;background:#34474f"></div>
</body></html>
